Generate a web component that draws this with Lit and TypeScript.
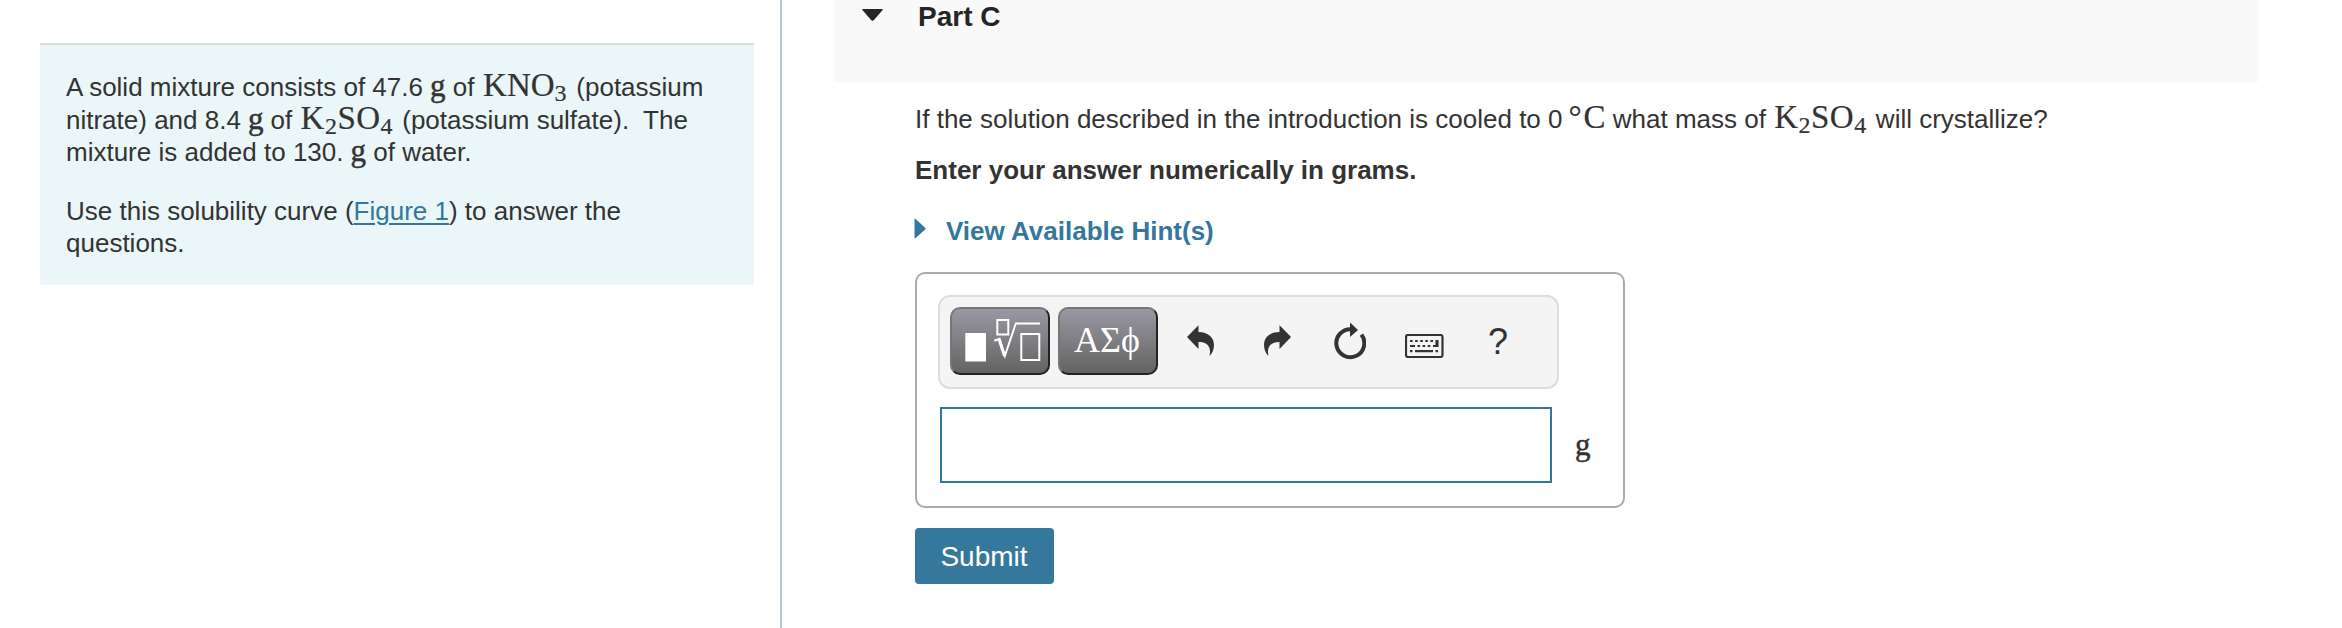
import { LitElement, html, css, svg } from "lit";
import { customElement } from "lit/decorators.js";

const arrow = svg`<path d="M0 12 11.500 .3V7C21 7 27 12.500 27 20c0 5-2 8.500-4.500 11C24 25 23 17 11.500 17v7z"/>`;

@customElement("app-root")
export class AppRoot extends LitElement {
  static styles = css`
    :host {
      display: block;
      font: 26px/32.5px "Liberation Sans", Arial, sans-serif;
      color: #333;
      background: #fff;
    }
    .page { display: flex; height: 628px; overflow: hidden; }
    .left { box-sizing: border-box; padding: 43px 26px 0 40px; border-right: 2px solid #b7c8de; width: 782px; flex: none; }
    .intro { height: 242px; box-sizing: border-box; background: #eaf6f8; border-top: 2px solid #ddd; padding: 26px 0 0 26px; white-space: nowrap; }
    p { margin: 0 0 26px; }
    a { color: #33789b; text-decoration: underline; text-decoration-thickness: 2px; text-underline-offset: 3px; }
    .m { display: inline-block; font: 33px/0 "Liberation Serif", serif; white-space: nowrap; -webkit-text-stroke: .2px #333; }
    .m sub { font-size: 24px; line-height: 0; vertical-align: -5px; }
    .g { width: 15.5px; margin-left: 7px; font-size: 31px; -webkit-text-stroke: .5px #333; }
    .kno { width: 86px; margin-left: 1.5px; }
    .kso { width: 94.500px; margin-left: 1px; letter-spacing: .5px; }
    .deg { width: 15px; margin-left: 6px; }
    .c { width: 22px; }
    .right { flex: 1; padding-left: 52px; }
    header { width: 1424px; height: 82px; background: #f9f9f9; display: flex; color: #252525; font-weight: bold; font-size: 28px; }
    header svg { margin: 9px 35px 0 28px; }
    header span { margin-top: 1px; }
    .body { padding-left: 81px; padding-top: 21px; display: flex; flex-direction: column; align-items: flex-start; white-space: nowrap; }
    .q { height: 32px; }
    .bold { font-weight: bold; margin-top: 19px; }
    .hint { display: flex; margin-top: 28px; color: #33789b; font-weight: bold; }
    .hint svg { margin: 3px 20px 0 -1px; }
    .card { width: 710px; height: 236px; box-sizing: border-box; border: 2px solid #aaa; border-radius: 10px; margin-top: 25px; padding: 21px 0 0 21px; }
    .bar { width: 621px; height: 94px; box-sizing: border-box; border: 2px solid #ddd; border-radius: 12px; background: #f4f4f4; display: flex; align-items: flex-start; padding: 10px; fill: #333; }
    .btn { width: 100px; height: 68px; box-sizing: border-box; flex: none; border: 2px solid; border-color: #777 #222 #222 #777; border-radius: 10px; background: linear-gradient(#9a98a2, #636363); color: #fff; padding: 0; margin: 0 8px 0 0; font: 36px/60px "Liberation Serif", serif; text-align: center; }
    .btn svg { display: block; fill: none; stroke: #fff; stroke-width: 2; }
    .greek { padding: 0 2px 2px 0; }
    .undo { margin: 18px 0 0 21px; }
    .redo { margin: 18px 0 0 50px; }
    .reset { margin: 15px 0 0 43px; }
    .keys { margin: 27px 0 0 39px; }
    .help { font-size: 36px; line-height: 40px; margin: 15px 0 0 44px; }
    .answer { display: flex; margin-top: 18px; padding-left: 2px; }
    .input { width: 612px; height: 76px; box-sizing: border-box; border: 2px solid #33789b; background: #fff; padding: 0; margin: 0; outline: 0; border-radius: 0; }
    .unit { line-height: 36px; margin: 20px 0 0 23px; }
    .submit { width: 139px; height: 56px; margin: 20px 0 0; border: 0; border-radius: 4px; background: #36789b; color: #fff; font: 28px/56px "Liberation Sans", Arial, sans-serif; padding: 1px 1px 0 0; }
    svg { flex: none; display: block; }
  `;

  render() {
    const g = html`<span class="m g">g</span>`;
    const kso = html`<span class="m kso">K<sub>2</sub>SO<sub>4</sub></span>`;
    return html`
      <div class="page">
        <aside class="left">
          <div class="intro">
            <p>A solid mixture consists of 47.6${g} of <span class="m kno">KNO<sub>3</sub></span> (potassium<br>nitrate) and 8.4${g} of ${kso} (potassium sulfate).&nbsp; The<br>mixture is added to 130.${g} of water.</p>
            <p>Use this solubility curve (<a>Figure 1</a>) to answer the<br>questions.</p>
          </div>
        </aside>
        <main class="right">
          <header>
            <svg width="21" height="12"><path fill="#252525" d="M1 0h19q1.500 0 .6 1L12 11q-1.500 1.500-3 0L.4 1Q-.5 0 1 0z"/></svg>
            <span>Part C</span>
          </header>
          <div class="body">
            <div class="q">If the solution described in the introduction is cooled to 0<span class="m deg">°</span><span class="m c">C</span> what mass of ${kso} will crystallize?</div>
            <div class="bold">Enter your answer numerically in grams.</div>
            <div class="hint">
              <svg width="12" height="21"><path fill="#33789b" d="M.5 1.500Q.5-.2 1.600 1l9.800 9q.6.6 0 1.200L1.600 20Q.5 21 .5 19.500z"/></svg>
              <span>View Available Hint(s)</span>
            </div>
            <section class="card">
              <div class="bar">
                <button class="btn">
                  <svg width="96" height="64">
                    <rect x="13.300" y="24" width="20.700" height="28.500" fill="#fff" stroke="none"/>
                    <rect x="45.300" y="11" width="11" height="14.500"/>
                    <path d="m42.300 31.700 5.300-2 5.300 17L63.800 14.500H88"/>
                    <path d="m47 30 5.500 17" stroke-width="3"/>
                    <rect x="69.300" y="25" width="18" height="26"/>
                  </svg>
                </button>
                <button class="btn greek">ΑΣϕ</button>
                <svg class="undo" width="27" height="31">${arrow}</svg>
                <svg class="redo" width="27" height="31"><g transform="matrix(-1 0 0 1 27 0)">${arrow}</g></svg>
                <svg class="reset" width="32" height="38">
                  <path d="M17.500 7.200A14 14 0 1 0 27.400 12.600" fill="none" stroke="#333" stroke-width="4"/>
                  <path d="m16 .5 8 7.500-8 7z"/>
                </svg>
                <svg class="keys" width="39" height="24">
                  <rect x="1" y="1" width="36.500" height="22" rx="2" fill="none" stroke="#333" stroke-width="2.200"/>
                  <g fill="none" stroke="#333" stroke-width="2.200">
                    <path stroke-dasharray="2.600 2.500" d="M5 7h23M12.500 12h15"/>
                    <path d="M5 12h5M5 17.200h2.500M30.500 17.200H33M10 17.200h18M32 6v6h-4"/>
                    <path d="M32 6v7" stroke-width="3"/>
                  </g>
                </svg>
                <span class="help">?</span>
              </div>
              <div class="answer"><input class="input"><span class="m g unit">g</span></div>
            </section>
            <button class="submit">Submit</button>
          </div>
        </main>
      </div>`;
  }
}
